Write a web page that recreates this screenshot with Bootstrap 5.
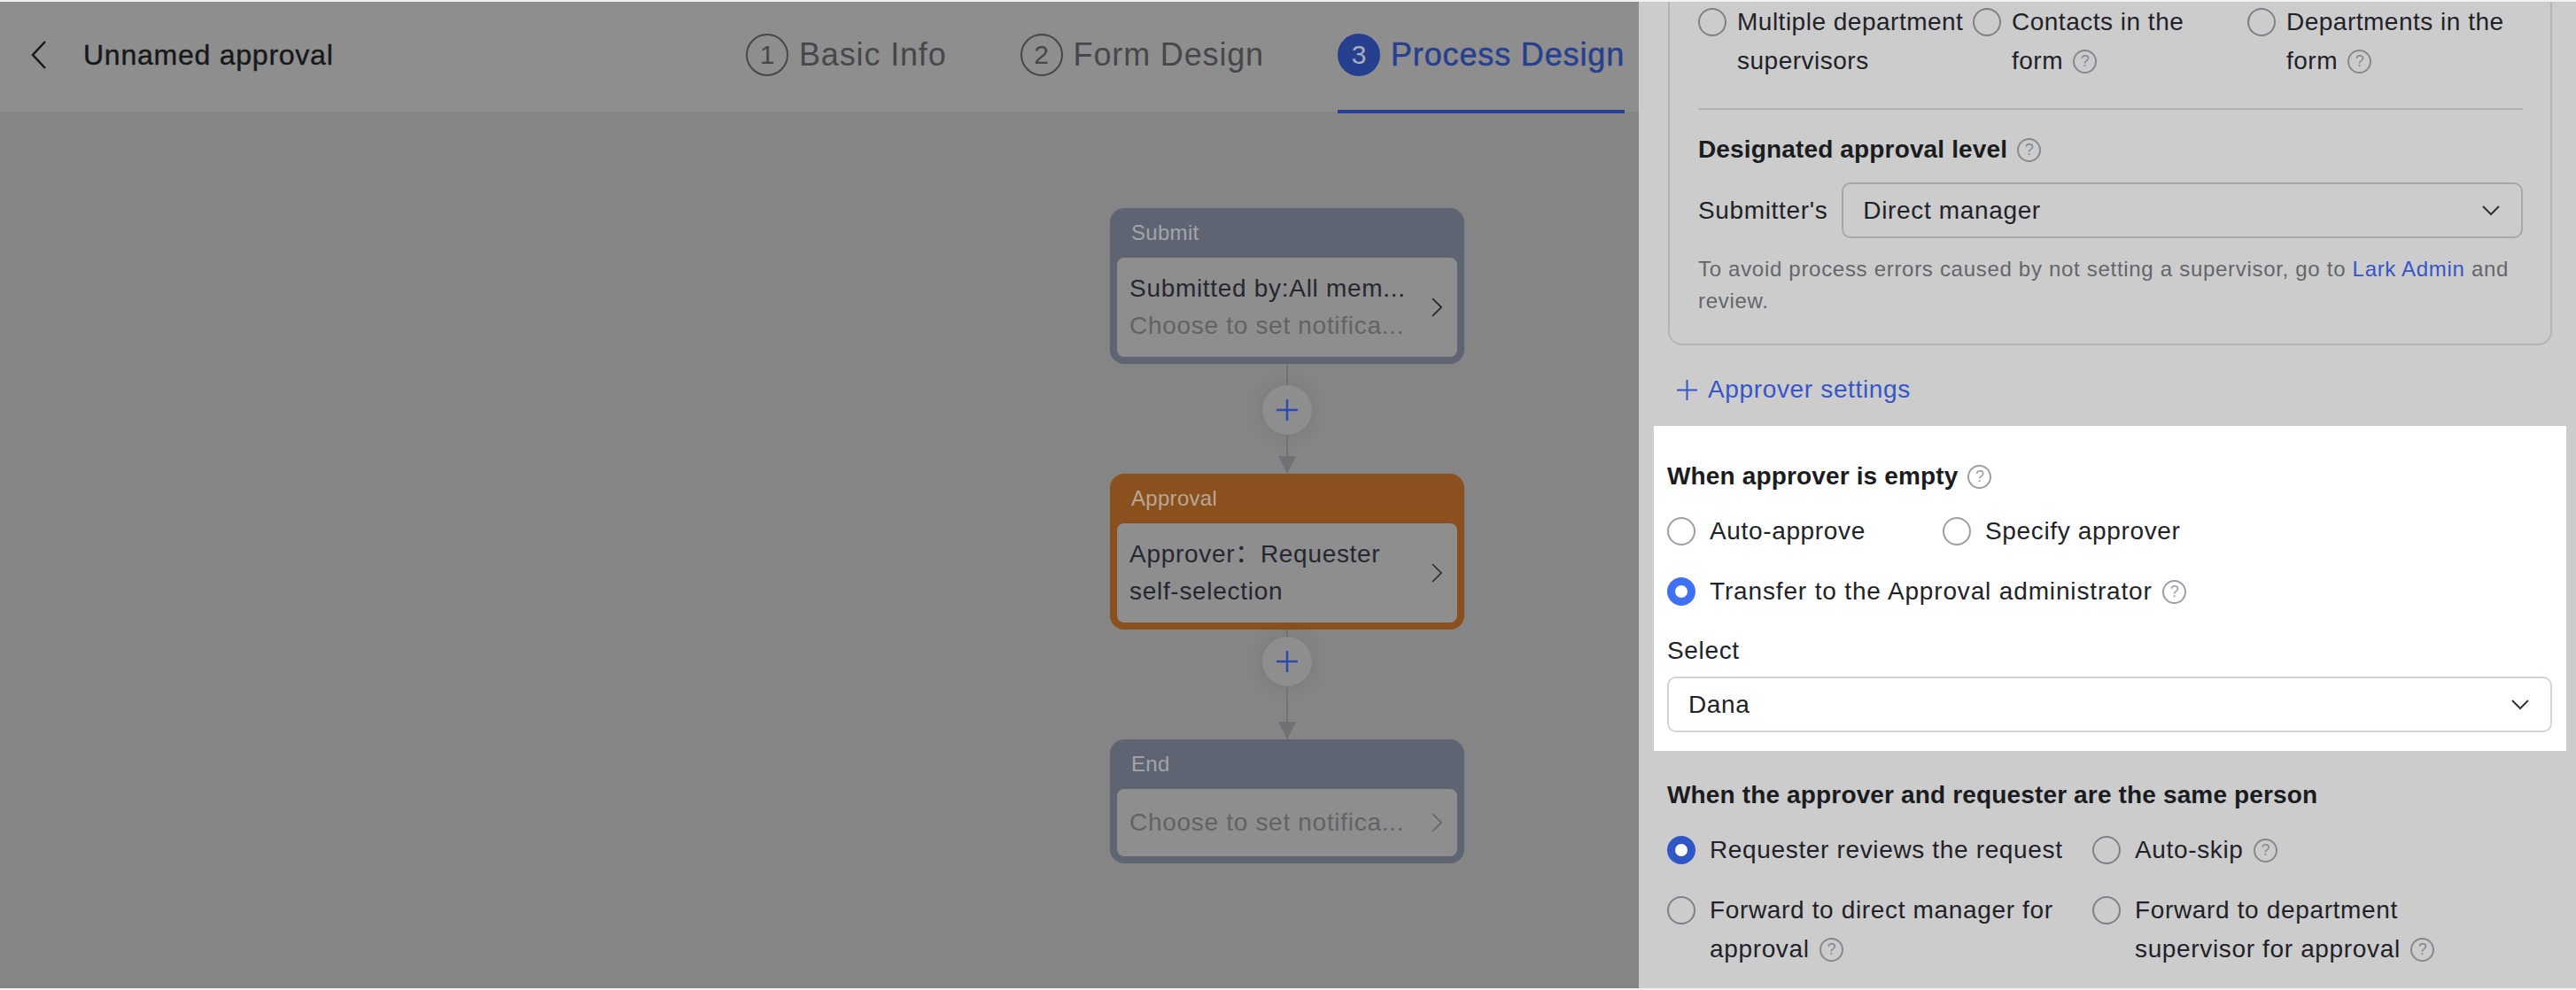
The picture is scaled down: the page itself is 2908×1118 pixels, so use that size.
<!DOCTYPE html>
<html lang="en">
<head>
    <meta charset="UTF-8">
    <meta name="viewport" content="width=device-width, initial-scale=1.0">
    <title>Unnamed approval</title>
    <link href="https://cdn.jsdelivr.net/npm/bootstrap@5.3.0/dist/css/bootstrap.min.css" rel="stylesheet">
    <style>
        html, body { height: 100%; }
        body {
            background: #f2f2f2;
            font-family: "Liberation Sans", "Noto Sans CJK SC", Arial, sans-serif;
            font-size: 28px;
            line-height: 44px;
            letter-spacing: .65px;
            color: #1f2329;
            overflow: hidden;
        }
        .app-shell { height: 1114px; margin-top: 2px; }
        .left-area { width: 1850px; background: #858585; }
        .top-bar { height: 124px; background: #8e8e8e; position: relative; }
        .back-arrow { margin-left: 34px; margin-bottom: 4px; width: 20px; height: 34px; flex: none; }
        .app-title { margin-left: 40px; margin-bottom: 4px; width: 285px; font-size: 32px; letter-spacing: .76px; white-space: nowrap; color: #17181a; -webkit-text-stroke: .4px #17181a; }
        .step-group { margin-left: 463px; gap: 83px; }
        .step-item { height: 124px; padding-bottom: 4px; gap: 12px; font-size: 36px; letter-spacing: .85px; color: #47474b; position: relative; white-space: nowrap; }
        .step-num {
            width: 48px; height: 48px; border: 2px solid #47474b; border-radius: 50%;
            font-size: 30px; line-height: 44px; text-align: center; letter-spacing: 0;
        }
        .step-item.on { color: #263f8f; -webkit-text-stroke: .5px #263f8f; }
        .step-item.on .step-num { background: #263f8f; color: #a9aeb9; border-color: #263f8f; -webkit-text-stroke: 0; }
        .step-item.on::after {
            content: ""; position: absolute; left: 0; right: 0; bottom: -2px; height: 4px; background: #263f8f;
        }
        .flow-col { width: 400px; margin-left: 1253px; padding-top: 109px; }
        .flow-node { border-radius: 16px; background: #5f6473; padding: 0 8px 8px; }
        .flow-node.orange { background: #8a501e; }
        .node-head { height: 56px; line-height: 56px; font-size: 24px; color: #a3a5ab; padding-left: 16px; letter-spacing: .3px; }
        .flow-node.orange .node-head { color: #b9a797; }
        .node-box {
            background: #8e8e8e; border-radius: 8px; padding: 0 17px 0 14px; height: 112px;
            line-height: 42px; color: #252830; font-size: 28px; letter-spacing: .7px;
        }
        .node-box.single { height: 76px; }
        .node-text { width: 322px; white-space: nowrap; }
        .node-text .muted { color: #626366; }
        .link-line { width: 2px; background: #737373; margin: 0 auto; }
        .plus-btn {
            width: 56px; height: 56px; border-radius: 50%; background: #8e8e8e; margin: 0 auto;
            box-shadow: 0 0 22px rgba(0,0,0,.1);
        }
        .arrow-tip {
            width: 0; height: 0; margin: 0 auto;
            border-left: 10px solid transparent; border-right: 10px solid transparent; border-top: 20px solid #6f7175;
        }
        .side-panel { width: 1058px; background: #cccccc; }
        .rule-card {
            margin-left: 33px; width: 998px; height: 388px; border: 2px solid #b4b4b4; border-top: 0;
            border-radius: 0 0 16px 16px; padding: 1px 32px 0;
        }
        .pick-line { gap: 12px; }
        .pick-line .form-check-input,
        .wide-pick .form-check-input {
            width: 32px; height: 32px; margin: 6px 0 0; flex: none;
            background-color: transparent; border: 2px solid #7d8188; box-shadow: none;
        }
        .wide-pick { gap: 16px; }
        .long-opt { letter-spacing: .85px; }
        .band .form-check-input { background-color: #fff; border-color: #9a9ea5; }
        .form-check-input:checked {
            background-color: #3056c8 !important; border-color: #3056c8 !important;
            background-size: 28px 28px;
        }
        .band .form-check-input:checked { background-color: #4070f4 !important; border-color: #4070f4 !important; }
        .three-col { width: 930px; letter-spacing: .5px; }
        .three-col > div { width: 310px; }
        .three-col span.txt { width: 266px; white-space: nowrap; }
        .rule-line { height: 2px; background: #b2b2b2; margin-top: 31px; width: 931px; }
        .sect-head { font-weight: 700; letter-spacing: .15px; color: #1a1c1f; }
        .help-dot {
            display: inline-block; width: 27px; height: 27px; border: 2px solid #85888e; border-radius: 50%;
            font-size: 18px; line-height: 23px; text-align: center; color: #85888e; font-weight: 400;
            letter-spacing: 0; vertical-align: 3px; margin-left: 3px;
        }
        .band .help-dot { border-color: #9a9ea5; color: #9a9ea5; }
        .pick-select {
            height: 63px; padding: 0 60px 0 22px; font-size: 28px; letter-spacing: .65px; color: #1f2329;
            border: 2px solid #a8a8a8; border-radius: 10px; background-color: transparent; box-shadow: none;
            background-image: url("data:image/svg+xml,%3csvg xmlns='http://www.w3.org/2000/svg' viewBox='0 0 20 12'%3e%3cpath fill='none' stroke='%23333' stroke-width='2' d='M1 1l9 9 9-9'/%3e%3c/svg%3e");
            background-size: 20px 12px; background-position: right 24px center;
        }
        .band .pick-select { border-color: #d0d3d8; background-color: #fff; }
        .hint-text { font-size: 24px; line-height: 36px; color: #63666b; margin-top: 17px; letter-spacing: .7px; }
        .lark-link { color: #3656c8; text-decoration: none; }
        .add-link { margin: 28px 0 0 43px; color: #3656c8; gap: 12px; }
        .band { margin: 19px 11px 0 17px; background: #fff; padding: 35px 16px 21px 15px; height: 367px; }
        .lower-sect { padding: 28px 0 0 32px; }
        .two-col > div:first-child { width: 480px; }
        .two-col span.txt { width: 415px; }
    </style>
</head>
<body>
    <div class="app-shell d-flex">
        <div class="left-area">
            <div class="top-bar d-flex align-items-center">
                <svg class="back-arrow" viewBox="0 0 20 34"><path d="M17 2L3 17l14 15" fill="none" stroke="#17181a" stroke-width="2.5"/></svg>
                <div class="app-title">Unnamed approval</div>
                <div class="step-group d-flex">
                    <div class="step-item d-flex align-items-center"><span class="step-num">1</span>Basic Info</div>
                    <div class="step-item d-flex align-items-center"><span class="step-num">2</span>Form Design</div>
                    <div class="step-item on d-flex align-items-center"><span class="step-num">3</span>Process Design</div>
                </div>
            </div>
            <div class="flow-col">
                <div class="flow-node">
                    <div class="node-head">Submit</div>
                    <div class="node-box d-flex align-items-center justify-content-between">
                        <div class="node-text">Submitted by:All mem...<br><span class="muted">Choose to set notifica...</span></div>
                        <svg width="12" height="22" viewBox="0 0 12 22"><path d="M1 1l10 10L1 21" fill="none" stroke="#1c1e22" stroke-width="1.6"/></svg>
                    </div>
                </div>
                <div class="link-line" style="height:24px"></div>
                <div class="plus-btn d-flex align-items-center justify-content-center">
                    <svg width="24" height="24" viewBox="0 0 24 24"><path d="M12 0v24M0 12h24" stroke="#2c4aa8" stroke-width="2.4"/></svg>
                </div>
                <div class="link-line" style="height:24px"></div>
                <div class="arrow-tip"></div>
                <div class="flow-node orange">
                    <div class="node-head">Approval</div>
                    <div class="node-box d-flex align-items-center justify-content-between">
                        <div class="node-text">Approver：Requester<br>self-selection</div>
                        <svg width="12" height="22" viewBox="0 0 12 22"><path d="M1 1l10 10L1 21" fill="none" stroke="#2a2c30" stroke-width="1.6"/></svg>
                    </div>
                </div>
                <div class="link-line" style="height:8px"></div>
                <div class="plus-btn d-flex align-items-center justify-content-center">
                    <svg width="24" height="24" viewBox="0 0 24 24"><path d="M12 0v24M0 12h24" stroke="#2c4aa8" stroke-width="2.4"/></svg>
                </div>
                <div class="link-line" style="height:40px"></div>
                <div class="arrow-tip"></div>
                <div class="flow-node">
                    <div class="node-head">End</div>
                    <div class="node-box single d-flex align-items-center justify-content-between">
                        <div class="node-text"><span class="muted">Choose to set notifica...</span></div>
                        <svg width="12" height="22" viewBox="0 0 12 22"><path d="M1 1l10 10L1 21" fill="none" stroke="#626366" stroke-width="1.6"/></svg>
                    </div>
                </div>
            </div>
        </div>

        <div class="side-panel">
            <div class="rule-card">
                <div class="three-col d-flex">
                    <div class="pick-line d-flex"><input class="form-check-input" type="radio" name="sup"><span class="txt">Multiple department<br>supervisors</span></div>
                    <div class="pick-line d-flex"><input class="form-check-input" type="radio" name="sup"><span class="txt">Contacts in the<br>form <span class="help-dot">?</span></span></div>
                    <div class="pick-line d-flex"><input class="form-check-input" type="radio" name="sup"><span class="txt">Departments in the<br>form <span class="help-dot">?</span></span></div>
                </div>
                <div class="rule-line"></div>
                <div class="sect-head" style="margin-top:23px">Designated approval level <span class="help-dot">?</span></div>
                <div class="d-flex align-items-center gap-3" style="margin-top:15px;width:931px">
                    <span class="flex-shrink-0">Submitter's</span>
                    <select class="form-select pick-select"><option>Direct manager</option></select>
                </div>
                <div class="hint-text">To avoid process errors caused by not setting a supervisor, go to <a class="lark-link" href="#">Lark Admin</a> and review.</div>
            </div>

            <div class="add-link d-flex align-items-center">
                <svg width="23" height="23" viewBox="0 0 23 23"><path d="M11.5 0v23M0 11.5h23" stroke="#3656c8" stroke-width="2"/></svg>
                <span>Approver settings</span>
            </div>

            <div class="band">
                <div class="sect-head">When approver is empty <span class="help-dot">?</span></div>
                <div class="d-flex" style="margin-top:18px">
                    <div class="wide-pick d-flex" style="width:311px"><input class="form-check-input" type="radio" name="empty"><span>Auto-approve</span></div>
                    <div class="wide-pick d-flex"><input class="form-check-input" type="radio" name="empty"><span>Specify approver</span></div>
                </div>
                <div class="wide-pick d-flex" style="margin-top:24px"><input class="form-check-input" type="radio" name="empty" checked><span class="long-opt">Transfer to the Approval administrator <span class="help-dot">?</span></span></div>
                <div style="margin-top:23px">Select</div>
                <select class="form-select pick-select" style="margin-top:7px"><option>Dana</option></select>
            </div>

            <div class="lower-sect">
                <div class="sect-head">When the approver and requester are the same person</div>
                <div class="two-col d-flex" style="margin-top:18px">
                    <div class="wide-pick d-flex"><input class="form-check-input" type="radio" name="same" checked><span class="txt">Requester reviews the request</span></div>
                    <div class="wide-pick d-flex"><input class="form-check-input" type="radio" name="same"><span class="txt">Auto-skip <span class="help-dot">?</span></span></div>
                </div>
                <div class="two-col d-flex" style="margin-top:24px">
                    <div class="wide-pick d-flex"><input class="form-check-input" type="radio" name="same"><span class="txt">Forward to direct manager for<br>approval <span class="help-dot">?</span></span></div>
                    <div class="wide-pick d-flex"><input class="form-check-input" type="radio" name="same"><span class="txt">Forward to department<br>supervisor for approval <span class="help-dot">?</span></span></div>
                </div>
            </div>
        </div>
    </div>
    <script src="https://cdn.jsdelivr.net/npm/bootstrap@5.3.0/dist/js/bootstrap.bundle.min.js"></script>
</body>
</html>
